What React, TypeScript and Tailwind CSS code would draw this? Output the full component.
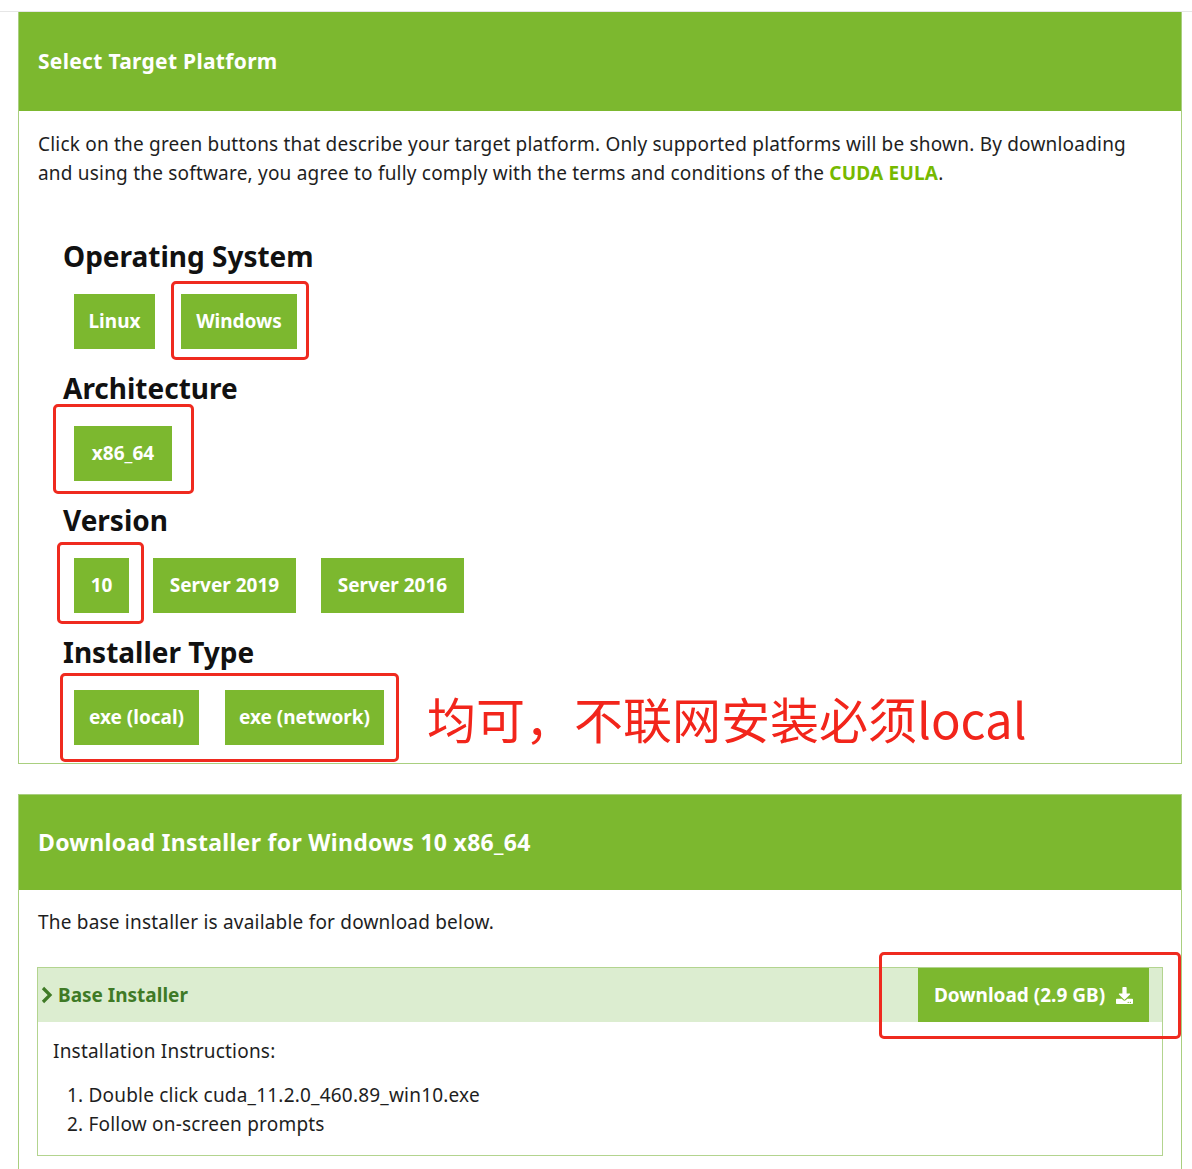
import { FaDownload } from "react-icons/fa";

const GREEN = "bg-[#7cb82f]";

function RedBox({ className }: { className: string }) {
  return (
    <span
      className={`pointer-events-none absolute rounded-[5px] border-[3px] border-[#ef2a1f] ${className}`}
    />
  );
}

function Btn({ label, w }: { label: string; w: string }) {
  return (
    <button
      type="button"
      className={`${GREEN} ${w} h-[55px] shrink-0 text-center text-[19px] font-bold text-white`}
    >
      {label}
    </button>
  );
}

function Heading({ children, first }: { children: string; first?: boolean }) {
  return (
    <h3
      className={`${first ? "mt-[51px]" : "mt-[22px]"} mb-[21px] text-[28px] font-bold leading-[34px] text-[#111]`}
    >
      {children}
    </h3>
  );
}

export default function App() {
  return (
    <div className="min-h-[1169px] overflow-hidden bg-white font-['Noto_Sans','Liberation_Sans',sans-serif] text-[#222]">
      <div className="h-[11px]" />
      <div className="h-px bg-[#e6e6e6]" />

      {/* target platform */}
      <section className="ml-[18px] w-[1164px] border border-t-0 border-[#a9cf7f]">
        <div className={`${GREEN} flex h-[99px] items-center px-[19px]`}>
          <h2 className="text-[21px] font-bold tracking-[0.3px] text-white">Select Target Platform</h2>
        </div>
        <div className="px-[19px] pt-[19px] pb-[18px]">
          <p className="text-[19px] leading-[29px] tracking-[0.2px] text-[#1e1e1e]">
            Click on the green buttons that describe your target platform. Only supported platforms
            will be shown. By downloading
            <br />
            and using the software, you agree to fully comply with the terms and conditions of the{" "}
            <span className="font-bold text-[#76b900]">CUDA EULA</span>.
          </p>

          <div className="pl-[25px]">
            <Heading first>Operating System</Heading>
            <div className="ml-[11px] flex gap-[26px]">
              <Btn label="Linux" w="w-[81px]" />
              <span className="relative">
                <Btn label="Windows" w="w-[116px]" />
                <RedBox className="-top-[13px] -bottom-[11px] -left-[10px] -right-[12px]" />
              </span>
            </div>

            <Heading>Architecture</Heading>
            <div className="ml-[11px] flex">
              <span className="relative">
                <Btn label="x86_64" w="w-[98px]" />
                <RedBox className="-top-[22px] -bottom-[13px] -left-[21px] -right-[22px]" />
              </span>
            </div>

            <Heading>Version</Heading>
            <div className="ml-[11px] flex gap-[24px]">
              <span className="relative">
                <Btn label="10" w="w-[55px]" />
                <RedBox className="-top-[16px] -bottom-[11px] -left-[17px] -right-[15px]" />
              </span>
              <Btn label="Server 2019" w="w-[143px]" />
              <Btn label="Server 2016" w="ml-px w-[143px]" />
            </div>

            <Heading>Installer Type</Heading>
            <div className="ml-[11px] flex items-center">
              <span className="relative flex gap-[26px]">
                <Btn label="exe (local)" w="w-[125px]" />
                <Btn label="exe (network)" w="w-[159px]" />
                <RedBox className="-top-[17px] -bottom-[17px] -left-[14px] -right-[15px]" />
              </span>
              <span className="ml-[43px] whitespace-nowrap font-['Noto_Sans_CJK_SC',sans-serif] text-[49px] leading-none text-[#f2251b]">
                均可，不联网安装必须local
              </span>
            </div>
          </div>
        </div>
      </section>

      {/* download */}
      <section className="mt-[30px] ml-[18px] min-h-[400px] w-[1164px] border border-[#a9cf7f]">
        <div className={`${GREEN} flex h-[95px] items-center px-[19px]`}>
          <h2 className="text-[23px] font-bold tracking-[0.3px] text-white">
            Download Installer for Windows 10 x86_64
          </h2>
        </div>
        <div className="px-[18px] pt-[18px]">
          <p className="pl-px text-[19px] leading-[29px] tracking-[0.2px] text-[#1e1e1e]">
            The base installer is available for download below.
          </p>

          <div className="mt-[30px] border border-[#b3d48f]">
            <div className="flex h-[54px] items-center bg-[#dcedd0]">
              <svg width="14" height="18" viewBox="0 0 14 18" className="ml-[2px]">
                <polyline
                  points="3,2 10,9 3,16"
                  fill="none"
                  stroke="#3f7a26"
                  strokeWidth="3.2"
                />
              </svg>
              <span className="ml-[4px] text-[19px] font-bold text-[#3f7a26]">Base Installer</span>
              <div className="flex-1" />
              <span className="relative mr-[13px] h-full">
                <button
                  type="button"
                  className={`${GREEN} flex h-full w-[231px] items-center justify-center gap-[11px] text-[19px] font-bold text-white`}
                >
                  Download (2.9 GB)
                  <FaDownload className="h-[17px] w-[17px]" />
                </button>
                <RedBox className="-top-[16px] -bottom-[17px] -left-[39px] -right-[32px]" />
              </span>
            </div>
            <div className="px-[15px] pt-[15px] pb-[16px] text-[19px] leading-[29px] tracking-[0.2px] text-[#1e1e1e]">
              <p>Installation Instructions:</p>
              <ol className="mt-[15px] list-none pl-[14px]">
                <li>1. Double click cuda_11.2.0_460.89_win10.exe</li>
                <li>2. Follow on-screen prompts</li>
              </ol>
            </div>
          </div>
        </div>
      </section>
    </div>
  );
}
